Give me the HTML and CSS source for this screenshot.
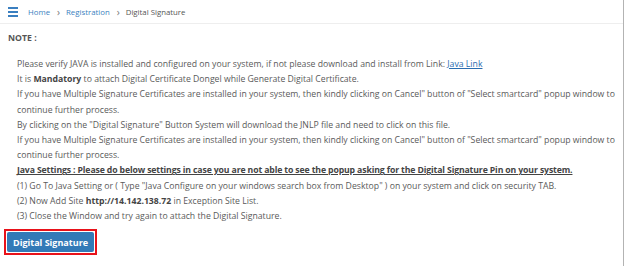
FILE: index.html
```html
<!DOCTYPE html>
<html lang="en">
<head>
    <meta charset="UTF-8">
    <title>Digital Signature</title>
    <link rel="stylesheet" href="styles.css">
</head>
<body>
    <div class="page">
        <div class="breadcrumb">
            <span class="menu-icon"><i></i><i></i><i></i></span>
            <a href="#" class="crumb">Home</a>
            <span class="sep">&#8250;</span>
            <a href="#" class="crumb">Registration</a>
            <span class="sep">&#8250;</span>
            <span class="current">Digital Signature</span>
        </div>
        <div class="content">
            <div class="note-title">NOTE :</div>
            <div class="notes">
                <p>Please verify JAVA is installed and configured on your system, if not please download and install from Link: <a href="#">Java Link</a></p>
                <p>It is <b>Mandatory</b> to attach Digital Certificate Dongel while Generate Digital Certificate.</p>
                <p>If you have Multiple Signature Certificates are installed in your system, then kindly clicking on Cancel" button of "Select smartcard" popup window to continue further process.</p>
                <p>By clicking on the "Digital Signature" Button System will download the JNLP file and need to click on this file.</p>
                <p>If you have Multiple Signature Certificates are installed in your system, then kindly clicking on Cancel" button of "Select smartcard" popup window to continue further process.</p>
                <p class="java-settings">Java Settings : Please do below settings in case you are not able to see the popup asking for the Digital Signature Pin on your system.</p>
                <p>(1) Go To Java Setting or ( Type "Java Configure on your windows search box from Desktop" ) on your system and click on security TAB.</p>
                <p>(2) Now Add Site <b>http://14.142.138.72</b> in Exception Site List.</p>
                <p>(3) Close the Window and try again to attach the Digital Signature.</p>
            </div>
            <div class="button-frame">
                <button class="button">Digital Signature</button>
            </div>
        </div>
    </div>
</body>
</html>
```

FILE: styles.css
```css
body {
    margin: 0;
    background-color: #fff;
    font-family: "Open Sans", "DejaVu Sans", sans-serif;
    font-size: 8.7px;
    color: #555;
}
.page {
    width: 623px;
    height: 266px;
    border-right: 1px solid #b3b3b3;
}
.breadcrumb {
    display: flex;
    align-items: center;
    height: 24px;
    padding-left: 8px;
    border-bottom: 1px solid #eeeeee;
    box-sizing: border-box;
    font-size: 7.8px;
}
.menu-icon {
    display: flex;
    flex-direction: column;
    gap: 2px;
    width: 10px;
    margin-right: 10px;
}
.menu-icon i {
    display: block;
    height: 2px;
    background-color: #3a7fc0;
}
.crumb {
    color: #3a7fc0;
    text-decoration: none;
}
.sep {
    color: #777;
    font-size: 10px;
    margin: 0 6px 0 7px;
    line-height: 10px;
}
.current {
    color: #555;
}
.content {
    padding: 0 8px;
}
.note-title {
    font-weight: bold;
    margin-top: 7px;
    line-height: 14px;
}
.notes {
    padding-left: 9px;
    margin-top: 12px;
    line-height: 15.2px;
    color: #5a5a5a;
}
.notes p {
    margin: 0;
}
.notes a {
    color: #2a6db0;
}
.notes b {
    color: #444;
}
.java-settings {
    font-weight: bold;
    text-decoration: underline;
    color: #444;
    letter-spacing: -0.13px;
}
.button-frame {
    display: inline-block;
    margin-top: 5px;
    margin-left: -4px;
    padding: 1px;
    border: 2px solid #e8121a;
}
.button {
    display: block;
    color: #fff;
    background-color: #337ab7;
    border: none;
    border-radius: 2px;
    padding: 0 6px;
    height: 20px;
    font-family: "Open Sans", sans-serif;
    font-weight: bold;
    font-size: 9px;
}
```
